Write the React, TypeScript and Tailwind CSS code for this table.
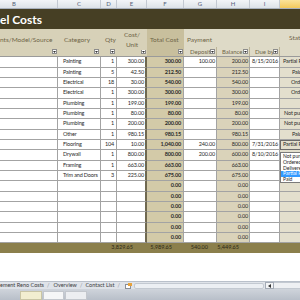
import React from "react";

const G = "grid grid-cols-[58px_43px_16px_30px_37px_33px_33px_30px_40px]";

function Filter() {
  return (
    <div className="w-[5px] h-[5px] shrink-0 bg-white border border-[#8c8c8c] flex items-center justify-center">
      <svg width="3" height="2" viewBox="0 0 3 2">
        <polygon points="0,0 3,0 1.5,2" fill="#333" />
      </svg>
    </div>
  );
}

type R = [string, string, string, string, string, string, string, string, string];

const rows: R[] = [
  ["Painting", "1", "300.00", "300.00", "100.00", "200.00", "8/15/2016", "Partial Payment", "pl-[3px]"],
  ["Painting", "5", "42.50", "212.50", "", "212.50", "", "Paid", "pl-[12px]"],
  ["Electrical", "18", "30.00", "540.00", "", "540.00", "", "Ordered", "pl-[11px]"],
  ["Electrical", "1", "300.00", "300.00", "", "300.00", "", "Ordered", "pl-[11px]"],
  ["Plumbing", "1", "199.00", "199.00", "", "199.00", "", "", ""],
  ["Plumbing", "1", "80.00", "80.00", "", "80.00", "", "Not purchased", "pl-[4px]"],
  ["Plumbing", "1", "200.00", "200.00", "", "200.00", "", "Not purchased", "pl-[4px]"],
  ["Other", "1", "980.15", "980.15", "", "980.15", "", "Paid", "pl-[12px]"],
  ["Flooring", "104", "10.00", "1,040.00", "240.00", "800.00", "7/31/2016", "Partial Payment", "pl-[3px]"],
  ["Drywall", "1", "800.00", "800.00", "200.00", "600.00", "8/10/2016", "", ""],
  ["Framing", "1", "663.00", "663.00", "", "663.00", "", "", ""],
  ["Trim and Doors", "3", "225.00", "675.00", "", "675.00", "", "", ""],
  ["", "", "", "0.00", "", "0.00", "", "", ""],
  ["", "", "", "0.00", "", "0.00", "", "", ""],
  ["", "", "", "0.00", "", "0.00", "", "", ""],
  ["", "", "", "0.00", "", "0.00", "", "", ""],
  ["", "", "", "0.00", "", "0.00", "", "", ""],
  ["", "", "", "0.00", "", "0.00", "", "", ""],
];

const letters: [string, string][] = [
  ["B", "pl-[12px]"],
  ["C", "justify-center"],
  ["D", "justify-center"],
  ["E", "justify-center"],
  ["F", "justify-center"],
  ["G", "justify-center"],
  ["H", "justify-center"],
  ["I", "justify-center"],
];

export default function App() {
  const cell = "border-b border-r border-[#a3a3a3] flex items-center overflow-hidden whitespace-nowrap";
  return (
    <div className="w-[300px] h-[300px] overflow-hidden bg-white font-['Lato','Open_Sans',sans-serif] text-[#2a2a2a] relative">
      {/* column letters */}
      <div className={`${G} h-[9px] bg-gradient-to-b from-[#f3f5f8] to-[#dde2e8] border-b border-[#a9b1bd]`}>
        {letters.map(([l, c]) => (
          <div key={l} className={`flex items-center ${c} text-[6px] leading-none text-[#55627a] border-r border-[#c3c9d2]`}>
            {l}
          </div>
        ))}
        <div className="bg-gradient-to-b from-[#fbe39a] to-[#f3c95a]" />
      </div>

      {/* title */}
      <div className="h-[20px] bg-[#463f24] flex items-center pt-[1px]">
        <span className="text-white font-bold text-[12px] leading-none">el Costs</span>
      </div>

      {/* header row 1 */}
      <div className={`${G} h-[18px] text-[6.5px] leading-none text-[#6f6547]`}>
        <div className="bg-[#d7d1b8] pt-[8px] whitespace-nowrap overflow-hidden">nts/Model/Source</div>
        <div className="bg-[#d7d1b8] pt-[8px] pl-[6px] whitespace-nowrap">Category</div>
        <div className="bg-[#d7d1b8] pt-[8px] pl-[4px] whitespace-nowrap">Qty</div>
        <div className="bg-[#d7d1b8] text-center leading-[10px] pt-[1px] relative z-10">
          Cost/
          <br />
          Unit
        </div>
        <div className="bg-[#c8bf9d] pt-[8px] pl-[3px] whitespace-nowrap">Total Cost</div>
        <div className="col-span-3 bg-[#dedac7] pt-[8px] pl-[3px] whitespace-nowrap">Payment</div>
        <div className="bg-[#dedac7] pt-[6px] pl-[9px] whitespace-nowrap">Status</div>
      </div>
      {/* header row 2 */}
      <div className={`${G} h-[10px] text-[6px] leading-none text-[#6f6547] border-b border-[#9a9a9a]`}>
        <div className="bg-[#d7d1b8] flex items-center justify-end pr-[1px]"><Filter /></div>
        <div className="bg-[#d7d1b8] flex items-center justify-end pr-[2px]"><Filter /></div>
        <div className="bg-[#d7d1b8] flex items-center justify-end pr-[2px]"><Filter /></div>
        <div className="bg-[#d7d1b8] flex items-center justify-end pr-[1px]"><Filter /></div>
        <div className="bg-[#c8bf9d] flex items-center justify-end pr-[1px]"><Filter /></div>
        <div className="bg-[#dedac7] flex items-center pl-[6px] pr-[1px] border-r border-[#bdb598]">
          <span className="flex-1 overflow-hidden whitespace-nowrap">Deposit</span>
          <Filter />
        </div>
        <div className="bg-[#dedac7] flex items-center pl-[5px] pr-[1px] border-r border-[#bdb598]">
          <span className="flex-1 overflow-hidden whitespace-nowrap">Balance</span>
          <Filter />
        </div>
        <div className="bg-[#dedac7] flex items-center pl-[5px] pr-[1px] border-r border-[#bdb598]">
          <span className="flex-1 overflow-hidden whitespace-nowrap">Due by</span>
          <Filter />
        </div>
        <div className="bg-[#dedac7]" />
      </div>

      {/* data rows */}
      {rows.map((r, i) => (
        <div key={i} className={`${G} ${i % 3 === 0 ? "h-[11px]" : "h-[10px]"} text-[5.5px] leading-none tracking-[-0.15px]`}>
          <div className={`${cell} bg-white`} />
          <div className={`${cell} bg-white pl-[5px]`}>{r[0]}</div>
          <div className={`${cell} bg-white justify-end pr-[2px]`}>{r[1]}</div>
          <div className={`${cell} bg-white justify-end pr-[1px] border-r-2 border-r-[#6f6850]`}>{r[2]}</div>
          <div className={`${cell} bg-[#d3caa8] justify-end pr-[2px] font-bold`}>{r[3]}</div>
          <div className={`${cell} bg-white justify-end pr-[1px]`}>{r[4]}</div>
          <div className={`${cell} bg-[#dad3ba] justify-end pr-[1px]`}>{r[5]}</div>
          <div className={`${cell} bg-white justify-end pr-[1px]`}>{r[6]}</div>
          <div className={`${cell} bg-[#e3dfcd] ${r[8]} ${i === 8 ? "outline outline-1 outline-[#6a6a6a] -outline-offset-1" : ""}`}>
            {r[7]}
          </div>
        </div>
      ))}

      {/* total row */}
      <div className={`${G} h-[10px] bg-[#8b7f4c] text-[5.5px] leading-none text-[#2c2815]`}>
        <div />
        <div />
        <div />
        <div className="flex items-center justify-end pr-[14px] whitespace-nowrap">3,829.65</div>
        <div className="flex items-center justify-end pr-[12px] whitespace-nowrap">5,989.65</div>
        <div className="flex items-center justify-end pr-[9px] whitespace-nowrap">540.00</div>
        <div className="flex items-center justify-end pr-[11px] whitespace-nowrap">5,449.65</div>
        <div />
        <div />
      </div>

      <div className="h-[28px] bg-white" />

      {/* sheet tabs */}
      <div className="h-[8px] bg-[#dfe3e9] flex items-center text-[5.5px] leading-none text-[#3c3c3c] border-t border-[#b9c0ca]">
        <span className="whitespace-nowrap">ement Reno Costs</span>
        <span className="px-[3px] text-[#8a8f98]">/</span>
        <span className="whitespace-nowrap pl-[1px]">Overview</span>
        <span className="px-[3px] text-[#8a8f98]">/</span>
        <span className="whitespace-nowrap">Contact List</span>
        <span className="px-[3px] text-[#8a8f98]">/</span>
        <svg width="7" height="6" viewBox="0 0 7 6" className="ml-[2px]">
          <rect x="0.5" y="1.5" width="5" height="4" fill="#fff" stroke="#8a8f98" strokeWidth="1" />
          <rect x="3" y="0" width="4" height="3" fill="#e8a23a" />
        </svg>
        <div className="ml-[2px] w-[130px] h-[6px] bg-[#eceff3] border border-[#c3c9d1] rounded-[2px]" />
        <div className="w-[9px] h-[7px] bg-[#f4f5f7] border border-[#a4abb6] flex items-center justify-center ml-[1px]">
          <svg width="3" height="4" viewBox="0 0 3 4">
            <polygon points="3,0 3,4 0,2" fill="#333" />
          </svg>
        </div>
        <div className="flex-1 h-[7px] bg-[#eef0f3] border-y border-[#c3c9d1]" />
      </div>

      {/* bottom strip */}
      <div className="h-[11px] bg-gradient-to-b from-[#cfd4db] to-[#b8bfc9] flex items-end gap-[1px] pl-[20px]">
        <div className="w-[22px] h-[9px] bg-[#f2eed0] border border-[#c9c5a5]" />
        <div className="w-[21px] h-[9px] bg-[#f5f6f7] border border-[#c3c7cd]" />
        <div className="w-[22px] h-[9px] bg-[#eceef1] border border-[#c3c7cd]" />
      </div>

      {/* data validation dropdown */}
      <div className="absolute left-[280px] top-[152px] w-[30px] h-[31px] bg-white border border-[#7a7a7a] text-[5px] leading-[5.8px] text-[#222] pt-[1px] whitespace-nowrap">
        <div className="pl-[2px]">Not purchased</div>
        <div className="pl-[2px]">Ordered</div>
        <div className="pl-[2px]">Delivered</div>
        <div className="pl-[2px] bg-[#3399ff] text-white">Partial Payment</div>
        <div className="pl-[2px]">Paid</div>
      </div>
    </div>
  );
}
